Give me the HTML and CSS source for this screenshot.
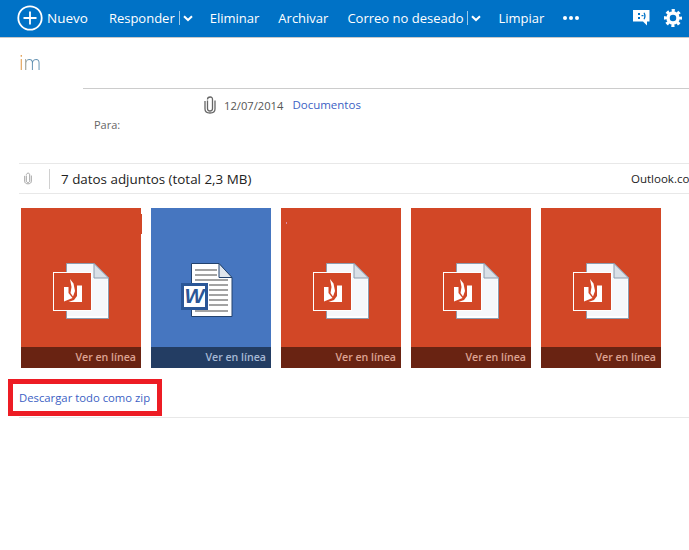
FILE: index.html
```html
<!DOCTYPE html>
<html lang="es">
<head>
<meta charset="utf-8">
<title>Outlook.com</title>
<link rel="stylesheet" href="styles.css">
</head>
<body>
<svg class="defs" width="0" height="0" aria-hidden="true">
  <defs>
    <symbol id="ppt" viewBox="0 0 58 58">
      <path d="M13.500 .5H41L55.500 15V55.500H13.500Z" fill="#f6f8fb" stroke="#8d9db0" stroke-width="1"/>
      <path d="M41 .5V15H55.500Z" fill="#d9e0e8" stroke="#8d9db0" stroke-width="1"/>
      <path d="M14 53H54V18H55V55H14Z" fill="#ffffff"/>
      <rect x=".5" y="9.500" width="38" height="38" fill="#d24726" stroke="#fff" stroke-width="1"/>
      <path d="M11 24H15.500V30L19.500 35L11 38.500Z" fill="#fff"/>
      <path d="M17 16L20.500 20.500L22 28L20 33.500L17.500 30L18.500 24Z" fill="#fff"/>
      <path d="M24 22.500H29V39H15.500L21 37L24 33Z" fill="#fff"/>
    </symbol>
    <symbol id="doc" viewBox="0 0 52 54">
      <path d="M10.500 .5H38L51 15V53.500H10.500Z" fill="#fff" stroke="#22426e" stroke-width="1"/>
      <path d="M38 .5V14.500H51Z" fill="#dfe5ec" stroke="#22426e" stroke-width="1"/>
      <path d="M14 6h22v2H14zM14 11h22v2H14zM14 16h33v2H14zM28 21h19v2H28zM28 26h19v2H28zM28 31h19v2H28zM28 36h19v2H28zM28 41h19v2H28zM14 47h33v2H14z" fill="#a3a3a3"/>
      <rect x="1.500" y="21.500" width="24" height="24" fill="#fff" stroke="#2b5797" stroke-width="3"/>
      <text x="13.500" y="40" class="word-w">W</text>
    </symbol>
    <symbol id="clip" viewBox="0 0 12 18">
      <path d="M3.500 4.500V12.500C3.500 14 4.500 15 6 15S8.500 14 8.500 12.500V3.500C8.500 2 7.700 1 6.300 1S3.500 2 3.500 3.500M1 5V13C1 15.500 3 17 6 17S11 15.500 11 13V4.500" fill="none" stroke="currentColor" stroke-width="1.300"/>
    </symbol>
  </defs>
</svg>

<header class="topbar">
  <div class="new">
    <svg class="plus" width="26" height="26" viewBox="0 0 26 26" aria-hidden="true">
      <circle cx="13" cy="13" r="11.700" fill="none" stroke="#fff" stroke-width="1.800"/>
      <path d="M13 6.500V19.500M6.500 13H19.500" stroke="#fff" stroke-width="1.800"/>
    </svg>
    <span>Nuevo</span>
  </div>
  <div class="cmd cmd-split">Responder<i class="sep"></i><svg class="chev" width="10" height="7" viewBox="0 0 10 7" aria-hidden="true"><path d="M1 1.200L5 5L9 1.200" fill="none" stroke="#fff" stroke-width="2"/></svg></div>
  <div class="cmd">Eliminar</div>
  <div class="cmd">Archivar</div>
  <div class="cmd cmd-split">Correo no deseado<i class="sep"></i><svg class="chev" width="10" height="7" viewBox="0 0 10 7" aria-hidden="true"><path d="M1 1.200L5 5L9 1.200" fill="none" stroke="#fff" stroke-width="2"/></svg></div>
  <div class="cmd">Limpiar</div>
  <div class="more"><i></i><i></i><i></i></div>
  <div class="tools">
    <svg width="17" height="16" viewBox="0 0 17 16" aria-hidden="true">
      <path d="M0 0H16.500V11.500H14V15.500L10 11.500H0Z" fill="#fff"/>
      <path d="M5 3h2v2H5zM5 7h2v2H5zM8.500 5h2v1.300H8.500zM11.500 2.500c1.500 2 1.500 5 0 7l-1-.5c1-1.800 1-4.200 0-6z" fill="#0072c6"/>
    </svg>
    <svg width="18" height="18" viewBox="0 0 18 18" aria-hidden="true">
      <circle cx="9" cy="9" r="5" fill="none" stroke="#fff" stroke-width="3.500"/>
      <circle cx="9" cy="9" r="7.500" fill="none" stroke="#fff" stroke-width="3" stroke-dasharray="3.100 2.790" stroke-dashoffset="1.550"/>
    </svg>
  </div>
</header>

<main class="page">
  <h1 class="subject">im</h1>
  <section class="meta">
    <div class="meta-row">
      <svg class="clip-dark" width="12" height="18" aria-hidden="true"><use href="#clip"/></svg>
      <span class="date">12/07/2014</span>
      <a class="link link-up">Documentos</a>
    </div>
    <div class="to">Para:</div>
  </section>

  <section class="att-bar">
    <svg class="clip-light" width="8" height="15" aria-hidden="true"><use href="#clip"/></svg>
    <i class="att-sep"></i>
    <span class="att-count">7 datos adjuntos (total 2,3 MB)</span>
    <span class="att-source">Outlook.com</span>
  </section>

  <section class="tiles">
    <article class="tile tile-ppt tile-notch"><svg class="file-icon" width="58" height="58" aria-hidden="true"><use href="#ppt"/></svg><div class="tile-foot">Ver en línea</div></article>
    <article class="tile tile-doc"><svg class="file-icon" width="52" height="54" aria-hidden="true"><use href="#doc"/></svg><div class="tile-foot">Ver en línea</div></article>
    <article class="tile tile-ppt tile-speck"><svg class="file-icon" width="58" height="58" aria-hidden="true"><use href="#ppt"/></svg><div class="tile-foot">Ver en línea</div></article>
    <article class="tile tile-ppt"><svg class="file-icon" width="58" height="58" aria-hidden="true"><use href="#ppt"/></svg><div class="tile-foot">Ver en línea</div></article>
    <article class="tile tile-ppt"><svg class="file-icon" width="58" height="58" aria-hidden="true"><use href="#ppt"/></svg><div class="tile-foot">Ver en línea</div></article>
  </section>

  <div class="download"><a class="link link-zip">Descargar todo como zip</a></div>
  <hr class="end-rule">
</main>
</body>
</html>
```
FILE: styles.css
```css
* { box-sizing: border-box; }
html, body { margin: 0; padding: 0; }
body {
  width: 689px;
  height: 550px;
  overflow: hidden;
  background: #fff;
  font-family: "Open Sans", "Noto Sans", sans-serif;
  color: #333;
}
.defs { display: block; height: 0; }
.word-w {
  font: italic 700 21px "Liberation Sans", sans-serif;
  fill: #2b5797;
  text-anchor: middle;
}
.topbar {
  display: flex;
  align-items: center;
  height: 38px;
  padding: 0 0 1px 17px;
  background: #0072c6;
  border-bottom: 1px solid #c8c8c8;
  color: #fff;
  font-size: 13px;
  white-space: nowrap;
}
.new { display: flex; align-items: center; gap: 4px; margin-right: 21px; }
.new span { font-size: 13.500px; }
.cmd { display: flex; align-items: center; margin-right: 19px; }
.cmd-split { margin-right: 17px; }
.sep { width: 1px; height: 14px; margin: 0 3px 0 4px; background: #9cc8e8; }
.more { display: flex; gap: 2px; }
.more i { width: 4px; height: 4px; border-radius: 50%; background: #fff; }
.tools { display: flex; align-items: center; gap: 14px; margin-left: auto; padding-right: 7px; }
.page { display: flex; flex-direction: column; }
.subject {
  margin: 0;
  height: 50px;
  padding: 12px 0 0 19px;
  font-size: 20px;
  line-height: 26px;
  font-weight: 300;
  background: linear-gradient(90deg, #dd8f38 22px, #5f8fb0 28px);
  -webkit-background-clip: text;
  background-clip: text;
  -webkit-text-fill-color: transparent;
}
.meta { margin-left: 83px; height: 75px; border-top: 1px solid #ccc; }
.meta-row { display: flex; align-items: center; height: 28px; padding: 4px 0 0 121px; }
.clip-dark { color: #666; margin-right: 8px; }
.date { font-size: 11.200px; color: #555; margin-right: 9px; }
.link { font-size: 11.500px; color: #3c5fc4; }
.link-up { margin-bottom: 2px; }
.to { padding-left: 11px; font-size: 11px; color: #666; }
.att-bar {
  display: flex;
  align-items: center;
  height: 31px;
  margin-left: 19px;
  border-top: 1px solid #e8e8e8;
  border-bottom: 1px solid #e8e8e8;
  white-space: nowrap;
  overflow: hidden;
}
.clip-light { color: #999; margin-left: 5px; }
.att-sep { width: 1px; height: 20px; margin-left: 17px; background: #d0d0d0; }
.att-count { margin-left: 11px; font-size: 13.400px; color: #222; }
.att-source { margin-left: auto; flex: 0 0 58px; font-size: 11.500px; color: #222; overflow: hidden; }
.tiles { display: flex; gap: 10px; margin: 14px 0 0 21px; }
.tile { position: relative; flex: 0 0 120px; height: 160px; display: flex; flex-direction: column; }
.tile-ppt { background: #d24726; }
.tile-doc { background: #4676c0; }
.tile-notch::after {
  content: "";
  position: absolute;
  left: 120px;
  top: 6px;
  width: 1px;
  height: 20px;
  background: #d24726;
}
.tile-speck::after {
  content: "";
  position: absolute;
  left: 5px;
  top: 14px;
  width: 1px;
  height: 2px;
  background: #e08aa0;
}
.file-icon { margin: 55px 0 0 32px; flex: none; }
.tile-doc .file-icon { margin: 55px 0 0 30px; }
.tile-foot {
  margin-top: auto;
  height: 21px;
  padding-right: 5px;
  text-align: right;
  font-size: 10.600px;
  line-height: 21px;
  font-weight: 600;
}
.tile-ppt .tile-foot { background: #692312; color: #dfa493; }
.tile-doc .tile-foot { background: #233d63; color: #a7bad6; }
.download {
  width: 154px;
  height: 37px;
  margin: 11px 0 0 8px;
  padding-left: 6px;
  display: flex;
  align-items: center;
  border: 5px solid #ed1c24;
  white-space: nowrap;
}
.link-zip { font-size: 11.300px; }
.end-rule { width: 670px; margin: 1px 0 0 19px; border: 0; border-top: 1px solid #e8e8e8; }
```
